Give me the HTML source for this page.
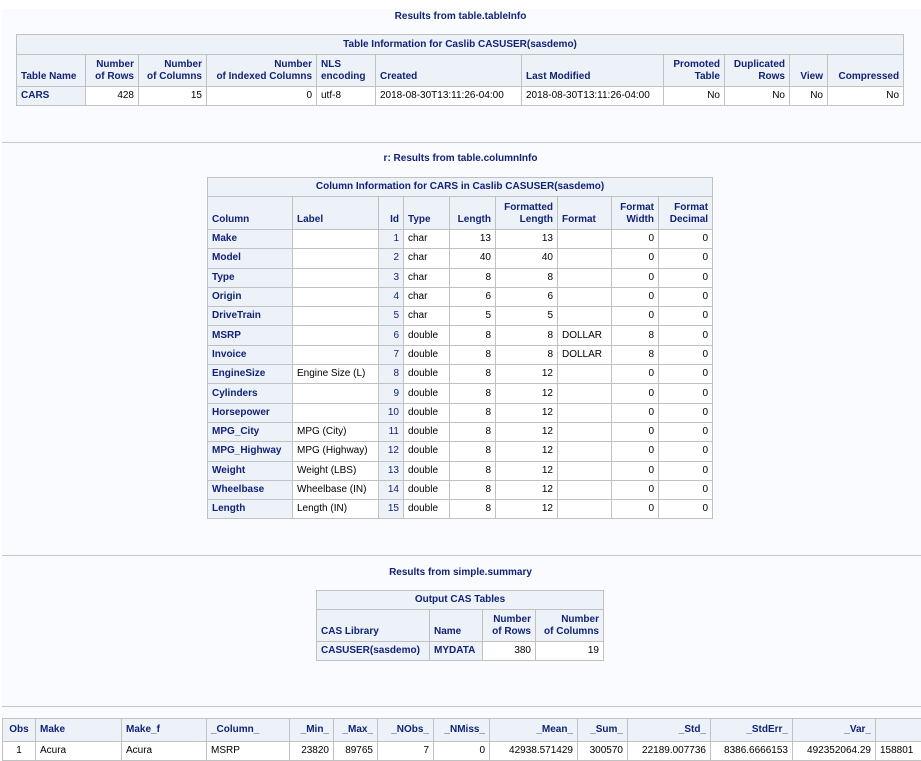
<!DOCTYPE html>
<html><head><meta charset="utf-8"><style>
body{margin:0;width:921px;height:750px;overflow:hidden;background:#fff;font-family:"Liberation Sans",Arial,sans-serif;font-size:10px;position:relative}
.bg{position:absolute;left:2px;top:9px;width:919px;height:741px;background:#fafbfe}
.hr{position:absolute;left:2px;width:919px;height:1px;background:#c8c8c8}
.ttl{position:absolute;left:0;width:921px;text-align:center;color:#112277;font-weight:bold;font-size:10px}
table{position:absolute;border-collapse:collapse;table-layout:fixed;background:#fff}
td,th{border:1px solid #c1c1c1;padding:0 4px;white-space:nowrap;overflow:hidden;font-size:10px;line-height:12px}
th{background:#edf2f9;color:#112277;font-weight:bold;vertical-align:bottom;padding-bottom:3px}
th.c{text-align:center;vertical-align:middle;padding-bottom:0}
td{color:#000;text-align:right;vertical-align:middle}
td.l,th.l{text-align:left}
th.r{text-align:right}
td.h{background:#edf2f9;color:#112277;font-weight:bold;text-align:left}
td.hr2{background:#edf2f9;color:#112277;text-align:right}
.m th{vertical-align:middle;padding-bottom:0}
</style></head><body>
<div class="bg"></div>
<div class="ttl" style="top:11px">Results from table.tableInfo</div>
<table style="left:16px;top:34px;width:888px">
<colgroup><col style="width:69px"><col style="width:53px"><col style="width:68px"><col style="width:110px"><col style="width:59px"><col style="width:146px"><col style="width:142px"><col style="width:61px"><col style="width:65px"><col style="width:38px"><col style="width:76px"></colgroup>
<tr style="height:20px"><th class="c" colspan="11">Table Information for Caslib CASUSER(sasdemo)</th></tr>
<tr style="height:32px"><th class="l">Table Name</th><th class="r">Number<br>of Rows</th><th class="r">Number<br>of Columns</th><th class="r">Number<br>of Indexed Columns</th><th class="l">NLS<br>encoding</th><th class="l">Created</th><th class="l">Last Modified</th><th class="r">Promoted<br>Table</th><th class="r">Duplicated<br>Rows</th><th class="r">View</th><th class="r">Compressed</th></tr>
<tr style="height:19px"><td class="h">CARS</td><td>428</td><td>15</td><td>0</td><td class="l">utf-8</td><td class="l">2018-08-30T13:11:26-04:00</td><td class="l">2018-08-30T13:11:26-04:00</td><td>No</td><td>No</td><td>No</td><td>No</td></tr>
</table>
<div class="hr" style="top:142px"></div>
<div class="ttl" style="top:153px">r: Results from table.columnInfo</div>
<table style="left:207px;top:177px;width:505px">
<colgroup><col style="width:85px"><col style="width:86px"><col style="width:25px"><col style="width:46px"><col style="width:46px"><col style="width:62px"><col style="width:54px"><col style="width:47px"><col style="width:54px"></colgroup>
<tr style="height:19px"><th class="c" colspan="9">Column Information for CARS in Caslib CASUSER(sasdemo)</th></tr>
<tr style="height:33px"><th class="l">Column</th><th class="l">Label</th><th class="r">Id</th><th class="l">Type</th><th class="r">Length</th><th class="r">Formatted<br>Length</th><th class="l">Format</th><th class="r">Format<br>Width</th><th class="r">Format<br>Decimal</th></tr>
<tr style="height:19.3px"><td class="h">Make</td><td class="l"></td><td class="hr2">1</td><td class="l">char</td><td>13</td><td>13</td><td class="l"></td><td>0</td><td>0</td></tr>
<tr style="height:19.3px"><td class="h">Model</td><td class="l"></td><td class="hr2">2</td><td class="l">char</td><td>40</td><td>40</td><td class="l"></td><td>0</td><td>0</td></tr>
<tr style="height:19.3px"><td class="h">Type</td><td class="l"></td><td class="hr2">3</td><td class="l">char</td><td>8</td><td>8</td><td class="l"></td><td>0</td><td>0</td></tr>
<tr style="height:19.3px"><td class="h">Origin</td><td class="l"></td><td class="hr2">4</td><td class="l">char</td><td>6</td><td>6</td><td class="l"></td><td>0</td><td>0</td></tr>
<tr style="height:19.3px"><td class="h">DriveTrain</td><td class="l"></td><td class="hr2">5</td><td class="l">char</td><td>5</td><td>5</td><td class="l"></td><td>0</td><td>0</td></tr>
<tr style="height:19.3px"><td class="h">MSRP</td><td class="l"></td><td class="hr2">6</td><td class="l">double</td><td>8</td><td>8</td><td class="l">DOLLAR</td><td>8</td><td>0</td></tr>
<tr style="height:19.3px"><td class="h">Invoice</td><td class="l"></td><td class="hr2">7</td><td class="l">double</td><td>8</td><td>8</td><td class="l">DOLLAR</td><td>8</td><td>0</td></tr>
<tr style="height:19.3px"><td class="h">EngineSize</td><td class="l">Engine Size (L)</td><td class="hr2">8</td><td class="l">double</td><td>8</td><td>12</td><td class="l"></td><td>0</td><td>0</td></tr>
<tr style="height:19.3px"><td class="h">Cylinders</td><td class="l"></td><td class="hr2">9</td><td class="l">double</td><td>8</td><td>12</td><td class="l"></td><td>0</td><td>0</td></tr>
<tr style="height:19.3px"><td class="h">Horsepower</td><td class="l"></td><td class="hr2">10</td><td class="l">double</td><td>8</td><td>12</td><td class="l"></td><td>0</td><td>0</td></tr>
<tr style="height:19.3px"><td class="h">MPG_City</td><td class="l">MPG (City)</td><td class="hr2">11</td><td class="l">double</td><td>8</td><td>12</td><td class="l"></td><td>0</td><td>0</td></tr>
<tr style="height:19.3px"><td class="h">MPG_Highway</td><td class="l">MPG (Highway)</td><td class="hr2">12</td><td class="l">double</td><td>8</td><td>12</td><td class="l"></td><td>0</td><td>0</td></tr>
<tr style="height:19.3px"><td class="h">Weight</td><td class="l">Weight (LBS)</td><td class="hr2">13</td><td class="l">double</td><td>8</td><td>12</td><td class="l"></td><td>0</td><td>0</td></tr>
<tr style="height:19.3px"><td class="h">Wheelbase</td><td class="l">Wheelbase (IN)</td><td class="hr2">14</td><td class="l">double</td><td>8</td><td>12</td><td class="l"></td><td>0</td><td>0</td></tr>
<tr style="height:19.3px"><td class="h">Length</td><td class="l">Length (IN)</td><td class="hr2">15</td><td class="l">double</td><td>8</td><td>12</td><td class="l"></td><td>0</td><td>0</td></tr>
</table>
<div class="hr" style="top:555px"></div>
<div class="ttl" style="top:567px">Results from simple.summary</div>
<table style="left:316px;top:590px;width:288px">
<colgroup><col style="width:113px"><col style="width:53px"><col style="width:53px"><col style="width:68px"></colgroup>
<tr style="height:19px"><th class="c" colspan="4">Output CAS Tables</th></tr>
<tr style="height:32px"><th class="l">CAS Library</th><th class="l">Name</th><th class="r">Number<br>of Rows</th><th class="r">Number<br>of Columns</th></tr>
<tr style="height:19px"><td class="h">CASUSER(sasdemo)</td><td class="h">MYDATA</td><td>380</td><td>19</td></tr>
</table>
<div class="hr" style="top:706px"></div>
<table class="m" style="left:2px;top:718px;width:940px">
<colgroup><col style="width:33px"><col style="width:86px"><col style="width:85px"><col style="width:83px"><col style="width:44px"><col style="width:44px"><col style="width:56px"><col style="width:56px"><col style="width:88px"><col style="width:50px"><col style="width:83px"><col style="width:82px"><col style="width:83px"><col style="width:67px"></colgroup>
<tr style="height:23px"><th class="c">Obs</th><th class="l">Make</th><th class="l">Make_f</th><th class="l">_Column_</th><th class="r">_Min_</th><th class="r">_Max_</th><th class="r">_NObs_</th><th class="r">_NMiss_</th><th class="r">_Mean_</th><th class="r">_Sum_</th><th class="r">_Std_</th><th class="r">_StdErr_</th><th class="r">_Var_</th><th class="r">_</th></tr>
<tr style="height:19px"><td style="text-align:center">1</td><td class="l">Acura</td><td class="l">Acura</td><td class="l">MSRP</td><td>23820</td><td>89765</td><td>7</td><td>0</td><td>42938.571429</td><td>300570</td><td>22189.007736</td><td>8386.6666153</td><td>492352064.29</td><td class="l">158801</td></tr>
</table>
</body></html>
